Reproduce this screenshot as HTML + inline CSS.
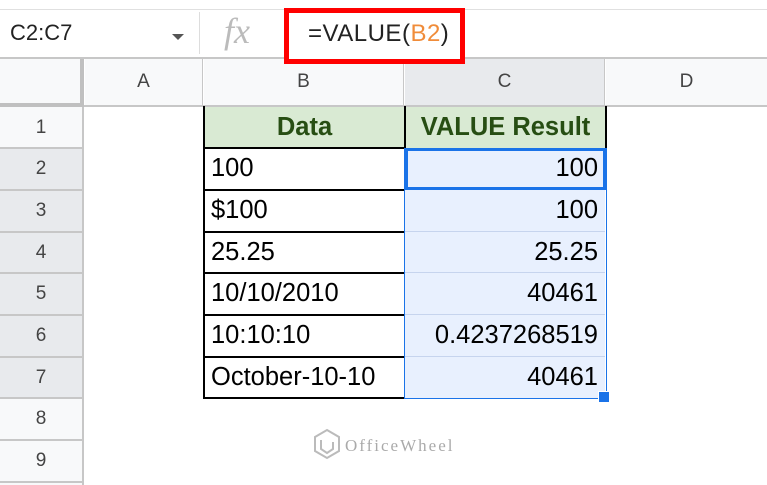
<!DOCTYPE html><html><head><style>
*{margin:0;padding:0;box-sizing:border-box}
body{width:767px;height:485px;overflow:hidden;background:#fff;font-family:"Liberation Sans",Arial,sans-serif;position:relative}
.a{position:absolute}
.t{font-size:25.5px;color:#000;line-height:41px;white-space:nowrap}
.h{font-size:19px;color:#444;text-align:center}
</style></head><body>
<div class="a" style="left:0;top:9px;width:767px;height:1px;background:#e0e0e0"></div>
<div class="a" style="left:0;top:57px;width:767px;height:2px;background:#c7c7c7"></div>
<div class="a" style="left:10px;top:20px;font-size:22px;color:#222">C2:C7</div>
<div class="a" style="left:172px;top:34px;width:0;height:0;border-left:6px solid transparent;border-right:6px solid transparent;border-top:6px solid #555"></div>
<div class="a" style="left:199px;top:12px;width:1px;height:42px;background:#ddd"></div>
<div class="a" style="left:224px;top:10px;font-family:'Liberation Serif',serif;font-style:italic;font-size:36px;color:#bbb">fx</div>
<!-- col headers -->
<div class="a" style="left:0;top:59px;width:84px;height:48px;background:#f8f9fa;border-right:4px solid #c0c0c0;border-bottom:4px solid #c0c0c0"></div>
<div class="a h" style="left:85px;top:59px;width:118px;height:48px;background:#f8f9fa;line-height:46px;border-right:1px solid #c7c7c7">A</div>
<div class="a h" style="left:204px;top:59px;width:200px;height:48px;background:#f8f9fa;line-height:46px;border-right:1px solid #c7c7c7">B</div>
<div class="a h" style="left:405px;top:59px;width:200px;height:48px;background:#e8eaed;line-height:46px;border-right:1px solid #c7c7c7">C</div>
<div class="a h" style="left:606px;top:59px;width:161px;height:48px;background:#f8f9fa;line-height:46px">D</div>
<div class="a" style="left:84px;top:105px;width:683px;height:2px;background:#c7c7c7"></div>
<div class="a" style="left:284px;top:8px;width:181px;height:56px;border:5px solid #f00;background:#fff"></div>
<div class="a" style="left:308px;top:20px;font-size:24px;color:#222;letter-spacing:0.5px">=VALUE(<span style="color:#f08c3a">B2</span>)</div>
<!-- row headers -->
<div class="a" style="left:0;top:107px;width:84px;height:378px;background:#f8f9fa;border-right:2px solid #c7c7c7"></div>
<div class="a" style="left:0;top:148px;width:82px;height:250px;background:#e8eaed"></div>
<div class="a h" style="left:0;top:107px;width:82px;line-height:41px">1</div>
<div class="a h" style="left:0;top:148px;width:82px;line-height:41px">2</div>
<div class="a h" style="left:0;top:190px;width:82px;line-height:41px">3</div>
<div class="a h" style="left:0;top:232px;width:82px;line-height:41px">4</div>
<div class="a h" style="left:0;top:273px;width:82px;line-height:41px">5</div>
<div class="a h" style="left:0;top:315px;width:82px;line-height:41px">6</div>
<div class="a h" style="left:0;top:357px;width:82px;line-height:41px">7</div>
<div class="a h" style="left:0;top:398px;width:82px;line-height:41px">8</div>
<div class="a h" style="left:0;top:440px;width:82px;line-height:41px">9</div>
<div class="a" style="left:0;top:147px;width:82px;height:2px;background:#c7c7c7"></div>
<div class="a" style="left:0;top:189px;width:82px;height:2px;background:#c7c7c7"></div>
<div class="a" style="left:0;top:231px;width:82px;height:2px;background:#c7c7c7"></div>
<div class="a" style="left:0;top:272px;width:82px;height:2px;background:#c7c7c7"></div>
<div class="a" style="left:0;top:314px;width:82px;height:2px;background:#c7c7c7"></div>
<div class="a" style="left:0;top:356px;width:82px;height:2px;background:#c7c7c7"></div>
<div class="a" style="left:0;top:397px;width:82px;height:2px;background:#c7c7c7"></div>
<div class="a" style="left:0;top:439px;width:82px;height:2px;background:#c7c7c7"></div>
<div class="a" style="left:0;top:481px;width:82px;height:2px;background:#c7c7c7"></div>
<!-- table -->
<div class="a" style="left:203px;top:107px;width:403px;height:41px;background:#d9ead3"></div>
<div class="a" style="left:405px;top:148px;width:200px;height:250px;background:#e8f0fe"></div>
<div class="a" style="left:203px;top:106px;width:2px;height:293px;background:#000"></div>
<div class="a" style="left:404px;top:106px;width:2px;height:42px;background:#000"></div>
<div class="a" style="left:605px;top:106px;width:2px;height:42px;background:#000"></div>
<div class="a" style="left:203px;top:147px;width:202px;height:2px;background:#000"></div>
<div class="a" style="left:203px;top:189px;width:202px;height:2px;background:#000"></div>
<div class="a" style="left:203px;top:231px;width:202px;height:2px;background:#000"></div>
<div class="a" style="left:203px;top:272px;width:202px;height:2px;background:#000"></div>
<div class="a" style="left:203px;top:314px;width:202px;height:2px;background:#000"></div>
<div class="a" style="left:203px;top:356px;width:202px;height:2px;background:#000"></div>
<div class="a" style="left:203px;top:397px;width:202px;height:2px;background:#000"></div>
<div class="a" style="left:405px;top:189px;width:200px;height:1px;background:#c6d4ee"></div>
<div class="a" style="left:405px;top:231px;width:200px;height:1px;background:#c6d4ee"></div>
<div class="a" style="left:405px;top:272px;width:200px;height:1px;background:#c6d4ee"></div>
<div class="a" style="left:405px;top:314px;width:200px;height:1px;background:#c6d4ee"></div>
<div class="a" style="left:405px;top:356px;width:200px;height:1px;background:#c6d4ee"></div>
<div class="a" style="left:404px;top:148px;width:203px;height:251px;border:1px solid #1a73e8"></div>
<div class="a" style="left:405px;top:148px;width:201px;height:42px;border:3px solid #1a73e8"></div>
<div class="a" style="left:598px;top:391px;width:12px;height:12px;background:#1a73e8;border:1px solid #fff"></div>
<div class="a t" style="left:205px;top:107px;width:199px;text-align:center;font-weight:bold;color:#274e13">Data</div>
<div class="a t" style="left:406px;top:107px;width:199px;text-align:center;font-weight:bold;color:#274e13">VALUE Result</div>
<div class="a t" style="left:211px;top:148px">100</div>
<div class="a t" style="left:211px;top:190px">$100</div>
<div class="a t" style="left:211px;top:232px">25.25</div>
<div class="a t" style="left:211px;top:273px">10/10/2010</div>
<div class="a t" style="left:211px;top:315px">10:10:10</div>
<div class="a t" style="left:211px;top:357px">October-10-10</div>
<div class="a t" style="left:405px;top:148px;width:193px;text-align:right">100</div>
<div class="a t" style="left:405px;top:190px;width:193px;text-align:right">100</div>
<div class="a t" style="left:405px;top:232px;width:193px;text-align:right">25.25</div>
<div class="a t" style="left:405px;top:273px;width:193px;text-align:right">40461</div>
<div class="a t" style="left:405px;top:315px;width:193px;text-align:right">0.4237268519</div>
<div class="a t" style="left:405px;top:357px;width:193px;text-align:right">40461</div>
<svg class="a" style="left:312px;top:428px" width="30" height="32" viewBox="0 0 30 32"><path d="M15 2 L27 9 V23 L15 30 L3 23 V9 Z" fill="none" stroke="#bbb" stroke-width="2"/><path d="M9 12 V21 L15 25 L21 21 V14" fill="none" stroke="#bbb" stroke-width="2"/></svg>
<div class="a" style="left:345px;top:436px;font-family:'Liberation Serif',serif;font-size:17px;letter-spacing:2px;color:#aaa">OfficeWheel</div>
</body></html>
